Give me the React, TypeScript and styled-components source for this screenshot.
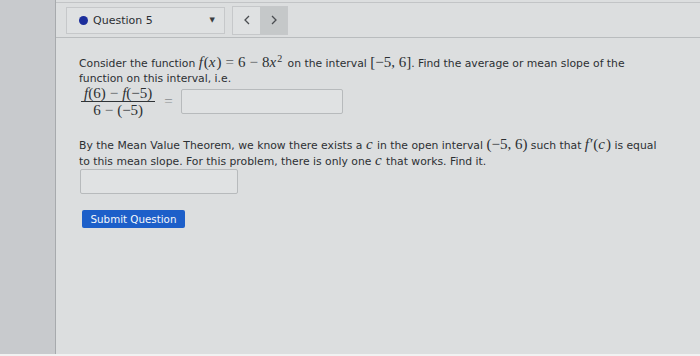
import { createGlobalStyle } from 'styled-components';
import styled from 'styled-components';

const GlobalStyle = createGlobalStyle`
  html, body {
    margin: 0;
    padding: 0;
    background: #dcdedf;
  }
  body {
    width: 700px;
    height: 356px;
    overflow: hidden;
    font-family: 'DejaVu Sans', Verdana, sans-serif;
    color: #2c3033;
  }
`;

const Page = styled.div`
  display: flex;
  flex-direction: column;
  width: 700px;
  height: 356px;
`;

const Body = styled.div`
  display: flex;
  flex: 1;
`;

const Sidebar = styled.div`
  width: 55px;
  background: #c8cacd;
  border-right: 1px solid #a7aaad;
`;

const Main = styled.div`
  flex: 1;
  display: flex;
  flex-direction: column;
  padding-top: 2px;
`;

const TopRule = styled.div`
  height: 1px;
  background: #c2c4c6;
`;

const Header = styled.div`
  display: flex;
  align-items: center;
  gap: 7px;
  padding: 3px 10px 3px 10px;
  height: 28px;
  border-bottom: 1px solid #b9bcbe;
`;

const QuestionSelect = styled.div`
  box-sizing: border-box;
  width: 159px;
  height: 27px;
  display: flex;
  align-items: center;
  padding: 0 9px 0 12px;
  border: 1px solid #c6c8ca;
  background: #dfe1e2;
  font-size: 11px;
  color: #2b2f33;
`;

const Dot = styled.span`
  width: 9px;
  height: 9px;
  border-radius: 50%;
  background: #1c2e9c;
  margin-right: 5px;
`;

const SelectLabel = styled.span`
  flex: 1;
`;

const Caret = styled.span`
  font-size: 7px;
  color: #3a3d40;
`;

const NavGroup = styled.div`
  display: flex;
  height: 27px;
  border: 1px solid #c6c8ca;
`;

const NavButton = styled.div<{ $active?: boolean }>`
  width: 27px;
  display: flex;
  align-items: center;
  justify-content: center;
  background: ${(p) => (p.$active ? '#c5c8c9' : '#dfe1e2')};
`;

const Content = styled.div`
  padding: 17px 0 0 23px;
  font-size: 10.8px;
  line-height: 15px;
`;

const Paragraph = styled.p`
  margin: 0;
  white-space: nowrap;
`;

const M = styled.span`
  font-family: 'Liberation Serif', 'Times New Roman', serif;
  font-size: 15px;
  line-height: 14px;
`;

const V = styled.i`
  font-family: 'Liberation Serif', 'Times New Roman', serif;
  font-size: 15px;
  line-height: 14px;
  padding-right: 1px;
`;

const Op = styled.span`
  font-family: 'Liberation Serif', 'Times New Roman', serif;
  font-size: 15px;
  line-height: 14px;
  margin: 0 4px;
  color: #55595c;
`;

const Sup = styled.sup`
  font-family: 'Liberation Serif', serif;
  font-size: 10px;
  line-height: 0;
  padding-right: 2px;
`;

const Equation = styled.div`
  display: flex;
  align-items: center;
`;

const Fraction = styled.div`
  display: inline-flex;
  flex-direction: column;
  align-items: center;
  font-family: 'Liberation Serif', 'Times New Roman', serif;
  font-size: 15px;
  line-height: 14px;
  padding: 0 2px;
`;

const Numerator = styled.span`
  border-bottom: 1px solid #2f3336;
  padding: 0 3px 1px;
`;

const Denominator = styled.span`
  padding-top: 1px;
`;

const Equals = styled.span`
  font-family: 'Liberation Serif', serif;
  font-size: 15px;
  color: #8a8d90;
  margin: 0 8px 0 7px;
`;

const AnswerBox = styled.div<{ $w: number }>`
  box-sizing: border-box;
  width: ${(p) => p.$w}px;
  height: 25px;
  border: 1px solid #b7babc;
  border-radius: 2px;
  background: #e0e2e3;
`;

const SecondParagraph = styled(Paragraph)`
  margin-top: 20px;
`;

const SecondBox = styled.div`
  margin: 0 0 0 1px;
`;

const SubmitButton = styled.button`
  margin: 16px 0 0 3px;
  width: 103px;
  height: 18px;
  padding: 0;
  border: none;
  border-radius: 2px;
  background: #1d5fc9;
  color: #f4f7fb;
  font-family: 'DejaVu Sans', Verdana, sans-serif;
  font-size: 10.3px;
`;

const BottomStrip = styled.div`
  height: 2px;
  background: #f1f2f2;
`;

export default function App() {
  return (
    <Page>
      <GlobalStyle />
      <Body>
        <Sidebar />
        <Main>
          <TopRule />
          <Header>
            <QuestionSelect>
              <Dot />
              <SelectLabel>Question 5</SelectLabel>
              <Caret>▼</Caret>
            </QuestionSelect>
            <NavGroup>
              <NavButton>
                <svg width="8" height="10" viewBox="0 0 8 10">
                  <path d="M6 1 L2 5 L6 9" fill="none" stroke="#4a4d50" strokeWidth="1.3" />
                </svg>
              </NavButton>
              <NavButton $active>
                <svg width="8" height="10" viewBox="0 0 8 10">
                  <path d="M2 1 L6 5 L2 9" fill="none" stroke="#4a4d50" strokeWidth="1.3" />
                </svg>
              </NavButton>
            </NavGroup>
          </Header>
          <Content>
            <Paragraph>
              Consider the function <V>f</V>
              <M>(</M>
              <V>x</V>
              <M>)</M>
              <Op>=</Op>
              <M>6</M>
              <Op>−</Op>
              <M>8</M>
              <V>x</V>
              <Sup>2</Sup> on the interval <M>[−5, 6]</M>. Find the average or mean slope of the
              <br />
              function on this interval, i.e.
            </Paragraph>
            <Equation>
              <Fraction>
                <Numerator>
                  <i>f</i>(6)
                  <Op>−</Op>
                  <i>f</i>(−5)
                </Numerator>
                <Denominator>
                  6<Op>−</Op>(−5)
                </Denominator>
              </Fraction>
              <Equals>=</Equals>
              <AnswerBox $w={162} />
            </Equation>
            <SecondParagraph>
              By the Mean Value Theorem, we know there exists a <V>c</V> in the open interval{' '}
              <M>(−5, 6)</M> such that <V>f</V>
              <M>′(</M>
              <V>c</V>
              <M>)</M> is equal
              <br />
              to this mean slope. For this problem, there is only one <V>c</V> that works. Find it.
            </SecondParagraph>
            <SecondBox>
              <AnswerBox $w={158} />
            </SecondBox>
            <SubmitButton>Submit Question</SubmitButton>
          </Content>
        </Main>
      </Body>
      <BottomStrip />
    </Page>
  );
}
